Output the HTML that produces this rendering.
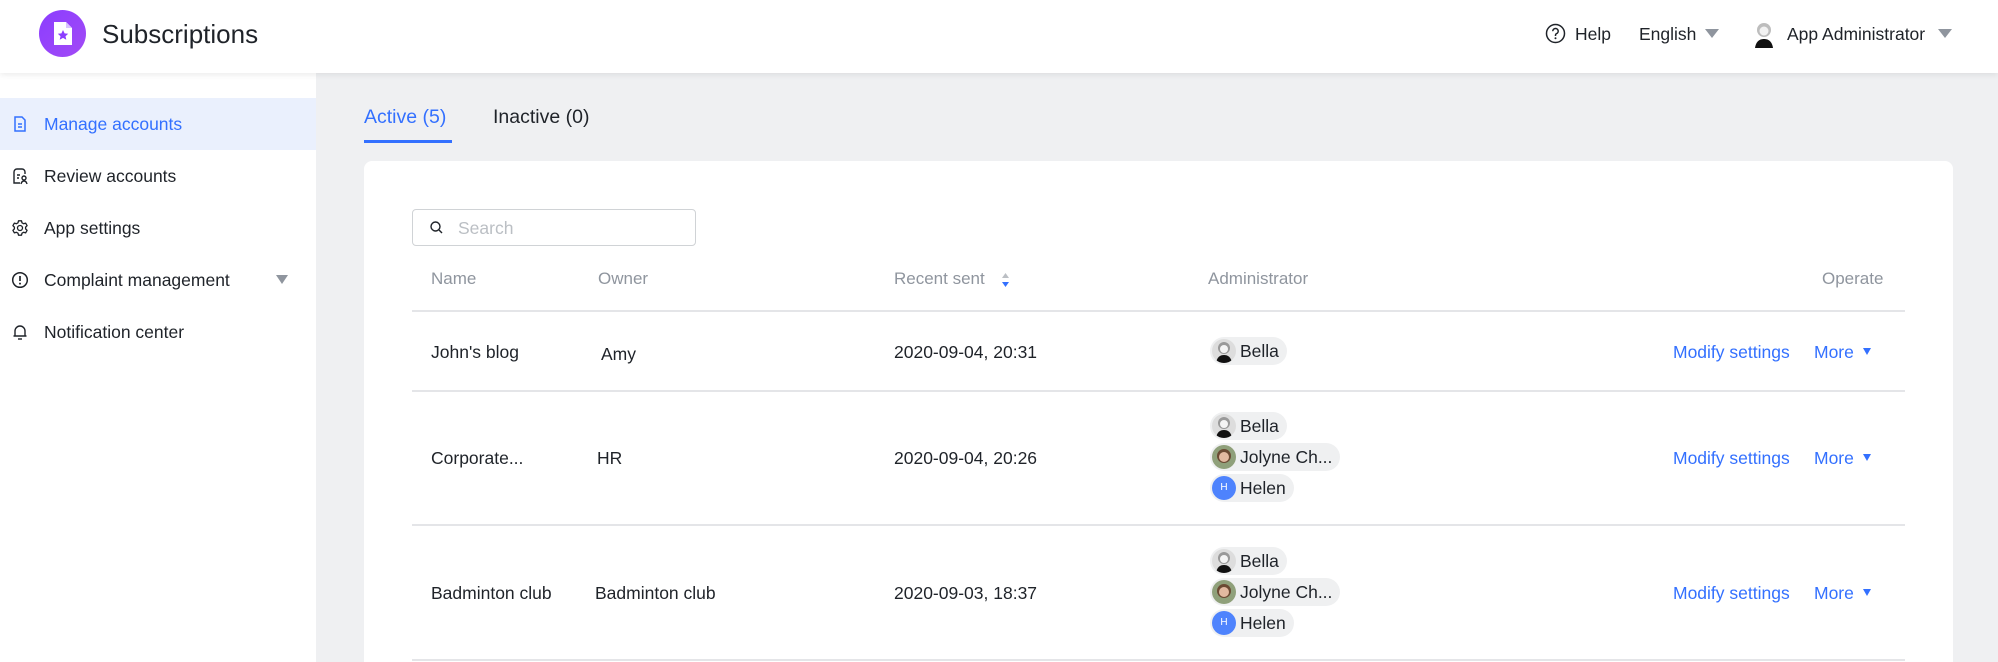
<!DOCTYPE html>
<html style="width:1998px;height:662px;overflow:hidden"><head><meta charset="utf-8"><style>
*{box-sizing:border-box;margin:0;padding:0}
body{width:1998px;height:662px;overflow:hidden;background:#eff0f2;font-family:"Liberation Sans",sans-serif;color:#1f2329;position:relative}
.abs{position:absolute}
.hdr{left:0;top:0;width:1998px;height:73px;background:#fff;box-shadow:0 2px 6px rgba(0,0,0,.08);z-index:2}
.side{left:0;top:73px;width:316px;height:589px;background:#fff}
.item{position:absolute;left:0;width:316px;height:52px;display:flex;align-items:center;font-size:17.5px;color:#1f2329}
.item svg{position:absolute;left:11px}
.item span{position:absolute;left:44px}
.card{left:364px;top:161px;width:1589px;height:501px;background:#fff;border-radius:8px 8px 0 0}
.t{position:absolute;white-space:nowrap;font-size:17.5px;line-height:20px}
.th{color:#8f959e;font-size:17px}
.line{position:absolute;left:412px;width:1493px;height:2px;background:#e4e5e8}
.chip{position:absolute;left:1210px;height:28px;border-radius:14px;background:#eff0f1;padding:0 8px 0 30px;font-size:17.5px;line-height:28px}
.av{position:absolute;left:2px;top:2px;width:24px;height:24px;border-radius:50%;overflow:hidden}
.blue{color:#3370ff}
.dd{display:inline-block;width:0;height:0;border-left:7px solid transparent;border-right:7px solid transparent;border-top:9px solid #8f959e}
.ddb{display:inline-block;width:0;height:0;border-left:4.5px solid transparent;border-right:4.5px solid transparent;border-top:7px solid #3370ff}
</style></head><body>
<div class="abs hdr">
  <svg class="abs" style="left:39px;top:10px" width="47" height="47" viewBox="0 0 47 47"><defs><linearGradient id="g" x1="0" y1="0" x2="1" y2="1"><stop offset="0" stop-color="#8b3dff"/><stop offset="1" stop-color="#a24bf5"/></linearGradient></defs><circle cx="23.5" cy="23.5" r="23.5" fill="url(#g)"/><path d="M15 12h12l6 6v17h-18z" fill="#fff"/><path d="M27 12v6h6" fill="#d9c4ff"/><path d="M24 20l1.6 3.4 3.6.4-2.7 2.4.8 3.6-3.3-1.9-3.3 1.9.8-3.6-2.7-2.4 3.6-.4z" fill="#8b3dff"/></svg>
  <div class="t" style="left:102px;top:19px;font-size:26px;line-height:30px;color:#1f2329">Subscriptions</div>
  <svg class="abs" style="left:1545px;top:23px" width="21" height="21" viewBox="0 0 21 21"><circle cx="10.5" cy="10.5" r="9" fill="none" stroke="#1f2329" stroke-width="1.5"/><path d="M7.8 8.2a2.7 2.7 0 1 1 3.6 2.5c-.6.3-.9.7-.9 1.4v.9" fill="none" stroke="#1f2329" stroke-width="1.5"/><circle cx="10.5" cy="15.3" r="1" fill="#1f2329"/></svg>
  <div class="t" style="left:1575px;top:24px">Help</div>
  <div class="t" style="left:1639px;top:24px">English</div>
  <span class="abs dd" style="left:1705px;top:29px"></span>
  <svg class="abs" style="left:1751px;top:20px" width="26" height="28" viewBox="0 0 26 28"><circle cx="13" cy="10" r="7" fill="#bdbdbd"/><circle cx="13" cy="11" r="4.5" fill="#f2f2f2"/><path d="M4 28c1-7 5-9 9-9s8 2 9 9z" fill="#111"/></svg>
  <div class="t" style="left:1787px;top:24px">App Administrator</div>
  <span class="abs dd" style="left:1938px;top:29px"></span>
</div>
<div class="abs side">
  <div class="item" style="top:25px;background:#eaf0fd;color:#3370ff"><svg width="18" height="18" viewBox="0 0 18 18"><path d="M4 2h7l3 3v11H4z" fill="none" stroke="#3370ff" stroke-width="1.5"/><path d="M7 9h4M7 12h4" stroke="#3370ff" stroke-width="1.5"/></svg><span>Manage accounts</span></div>
  <div class="item" style="top:77px"><svg width="18" height="18" viewBox="0 0 18 18"><path d="M9 16H3V5a3 3 0 0 1 3-3h5a3 3 0 0 1 3 3v2" fill="none" stroke="#1f2329" stroke-width="1.4"/><path d="M6 8h3M6 11h2" stroke="#1f2329" stroke-width="1.4"/><circle cx="13" cy="11" r="2" fill="none" stroke="#1f2329" stroke-width="1.4"/><path d="M10 17c.5-2 1.5-3 3-3s2.5 1 3 3" fill="none" stroke="#1f2329" stroke-width="1.4"/></svg><span>Review accounts</span></div>
  <div class="item" style="top:129px"><svg width="18" height="18" viewBox="0 0 18 18"><path d="M7.5 1.8h3l.5 2 1.6.9 2-.6 1.5 2.6-1.5 1.4v1.8l1.5 1.4-1.5 2.6-2-.6-1.6.9-.5 2h-3l-.5-2-1.6-.9-2 .6L1.9 11.3l1.5-1.4V8.1L1.9 6.7l1.5-2.6 2 .6L7 3.8z" fill="none" stroke="#1f2329" stroke-width="1.3" stroke-linejoin="round"/><circle cx="9" cy="9" r="2.5" fill="none" stroke="#1f2329" stroke-width="1.3"/></svg><span>App settings</span></div>
  <div class="item" style="top:181px"><svg width="18" height="18" viewBox="0 0 18 18"><circle cx="9" cy="9" r="7.3" fill="none" stroke="#1f2329" stroke-width="1.5"/><path d="M9 5v5" stroke="#1f2329" stroke-width="1.7"/><circle cx="9" cy="12.6" r="1" fill="#1f2329"/></svg><span>Complaint management</span><span class="dd" style="position:absolute;left:276px;top:21px;border-left-width:6.5px;border-right-width:6.5px"></span></div>
  <div class="item" style="top:233px"><svg width="18" height="18" viewBox="0 0 18 18"><path d="M4 13V8a5 5 0 0 1 10 0v5h1.5M4 13H2.5M4 13h10" fill="none" stroke="#1f2329" stroke-width="1.4"/><path d="M7 16h4" stroke="#1f2329" stroke-width="1.4"/></svg><span>Notification center</span></div>
</div>
<div class="t blue" style="left:364px;top:106px;font-size:19.5px;line-height:22px">Active (5)</div>
<div class="abs" style="left:364px;top:140px;width:88px;height:3px;background:#3370ff"></div>
<div class="t" style="left:493px;top:106px;font-size:19.5px;line-height:22px">Inactive (0)</div>
<div class="abs card"></div>
<div class="abs" style="left:412px;top:209px;width:284px;height:37px;border:1.5px solid #d0d3d6;border-radius:4px;background:#fff"></div>
<svg class="abs" style="left:429px;top:220px" width="15" height="15" viewBox="0 0 15 15"><circle cx="6.5" cy="6.5" r="4.5" fill="none" stroke="#1f2329" stroke-width="1.4"/><path d="M10 10l3 3" stroke="#1f2329" stroke-width="1.4"/></svg>
<div class="t" style="left:458px;top:218px;color:#bbbfc4">Search</div>
<div class="t th" style="left:431px;top:269px">Name</div>
<div class="t th" style="left:598px;top:269px">Owner</div>
<div class="t th" style="left:894px;top:269px">Recent sent</div>
<svg class="abs" style="left:1001px;top:272px" width="9" height="16" viewBox="0 0 9 16"><path d="M4.5 1l3.5 5H1z" fill="#bbbfc4"/><path d="M4.5 15L8 10H1z" fill="#3370ff"/></svg>
<div class="t th" style="left:1208px;top:269px">Administrator</div>
<div class="t th" style="left:1822px;top:269px">Operate</div>
<div class="line" style="top:310px"></div>

<div class="t" style="left:431px;top:342px">John's blog</div>
<div class="t" style="left:601px;top:344px">Amy</div>
<div class="t" style="left:894px;top:342px">2020-09-04, 20:31</div>
<div class="chip" style="top:337px"><div class="av" style="background:#ddd"><svg width="24" height="24"><circle cx="12" cy="9" r="6" fill="#999"/><circle cx="12" cy="10" r="4" fill="#f4f4f4"/><path d="M4 24c1-6 4-8 8-8s7 2 8 8z" fill="#111"/></svg></div>Bella</div>
<div class="t blue" style="left:1673px;top:342px">Modify settings</div>
<div class="t blue" style="left:1814px;top:342px">More</div><span class="abs ddb" style="left:1863px;top:348px"></span>
<div class="line" style="top:390px"></div>

<div class="t" style="left:431px;top:448px">Corporate...</div>
<div class="t" style="left:597px;top:448px">HR</div>
<div class="t" style="left:894px;top:448px">2020-09-04, 20:26</div>
<div class="chip" style="top:412px"><div class="av" style="background:#ddd"><svg width="24" height="24"><circle cx="12" cy="9" r="6" fill="#999"/><circle cx="12" cy="10" r="4" fill="#f4f4f4"/><path d="M4 24c1-6 4-8 8-8s7 2 8 8z" fill="#111"/></svg></div>Bella</div>
<div class="chip" style="top:443px"><div class="av" style="background:#8fa07a"><svg width="24" height="24"><circle cx="12" cy="11" r="7" fill="#6b4a33"/><circle cx="12" cy="12" r="5" fill="#e2b9a0"/></svg></div>Jolyne Ch...</div>
<div class="chip" style="top:474px"><div class="av" style="background:#4e83fd;color:#fff;font-size:10px;line-height:24px;text-align:center">H</div>Helen</div>
<div class="t blue" style="left:1673px;top:448px">Modify settings</div>
<div class="t blue" style="left:1814px;top:448px">More</div><span class="abs ddb" style="left:1863px;top:454px"></span>
<div class="line" style="top:524px"></div>

<div class="t" style="left:431px;top:583px">Badminton club</div>
<div class="t" style="left:595px;top:583px">Badminton club</div>
<div class="t" style="left:894px;top:583px">2020-09-03, 18:37</div>
<div class="chip" style="top:547px"><div class="av" style="background:#ddd"><svg width="24" height="24"><circle cx="12" cy="9" r="6" fill="#999"/><circle cx="12" cy="10" r="4" fill="#f4f4f4"/><path d="M4 24c1-6 4-8 8-8s7 2 8 8z" fill="#111"/></svg></div>Bella</div>
<div class="chip" style="top:578px"><div class="av" style="background:#8fa07a"><svg width="24" height="24"><circle cx="12" cy="11" r="7" fill="#6b4a33"/><circle cx="12" cy="12" r="5" fill="#e2b9a0"/></svg></div>Jolyne Ch...</div>
<div class="chip" style="top:609px"><div class="av" style="background:#4e83fd;color:#fff;font-size:10px;line-height:24px;text-align:center">H</div>Helen</div>
<div class="t blue" style="left:1673px;top:583px">Modify settings</div>
<div class="t blue" style="left:1814px;top:583px">More</div><span class="abs ddb" style="left:1863px;top:589px"></span>
<div class="abs" style="left:412px;top:659px;width:1493px;height:2px;background:#e4e5e8"></div>
</body></html>
